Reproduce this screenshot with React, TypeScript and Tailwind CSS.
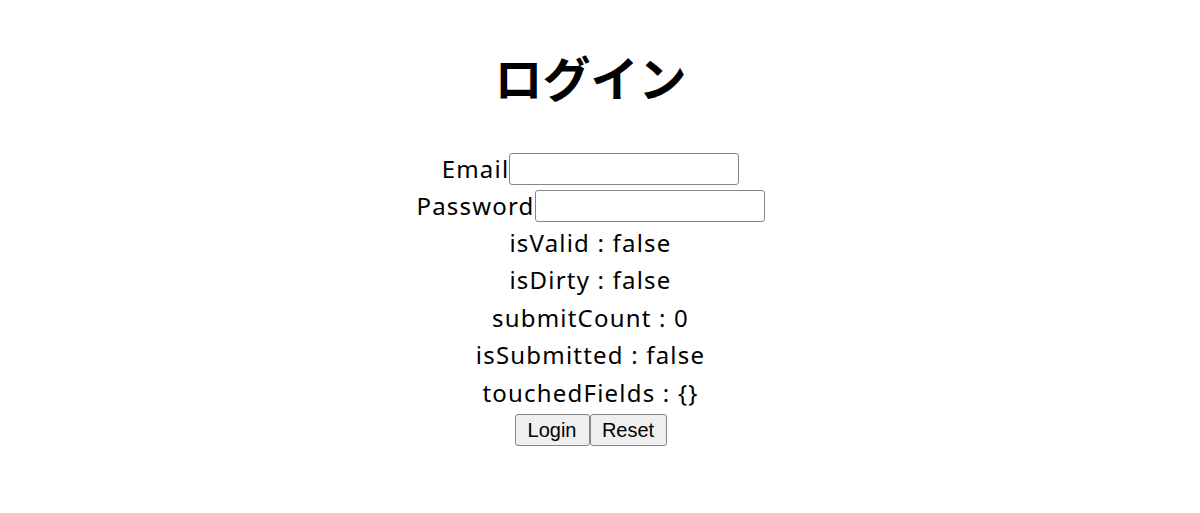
const stats = [
  "isValid : false",
  "isDirty : false",
  "submitCount : 0",
  "isSubmitted : false",
  "touchedFields : {}",
];

export default function App() {
  return (
    <div className="w-[1181px] min-h-[513px] bg-white text-black text-center font-['Noto_Sans','Noto_Sans_CJK_JP',sans-serif] text-[24px] tracking-[0.05em]">
      <h1 className="pt-[42px] h-[150px] text-[48px] font-bold leading-[68px] tracking-normal font-['Noto_Sans_CJK_JP',sans-serif]">
        ログイン
      </h1>
      <form className="flex flex-col items-center">
        <div className="flex h-[37px] items-center justify-center">
          <label>Email</label>
          <input
            type="text"
            className="h-[32px] w-[230px] rounded-[3px] border-[1.5px] border-[#858585] bg-white px-1"
          />
        </div>
        <div className="flex h-[37px] items-center justify-center">
          <label>Password</label>
          <input
            type="password"
            className="h-[32px] w-[230px] rounded-[3px] border-[1.5px] border-[#858585] bg-white px-1"
          />
        </div>
        {stats.map((s) => (
          <div key={s} className="flex h-[37.5px] items-center justify-center">
            {s}
          </div>
        ))}
        <div className="mt-[2px] flex items-center justify-center tracking-normal">
          <button
            type="button"
            className="h-[32px] w-[75px] rounded-[3px] border-[1.5px] border-[#858585] bg-[#efefef] font-['Liberation_Sans',sans-serif] text-[20px]"
          >
            Login
          </button>
          <button
            type="button"
            className="h-[32px] w-[77px] rounded-[3px] border-[1.5px] border-[#858585] bg-[#efefef] font-['Liberation_Sans',sans-serif] text-[20px]"
          >
            Reset
          </button>
        </div>
      </form>
    </div>
  );
}
